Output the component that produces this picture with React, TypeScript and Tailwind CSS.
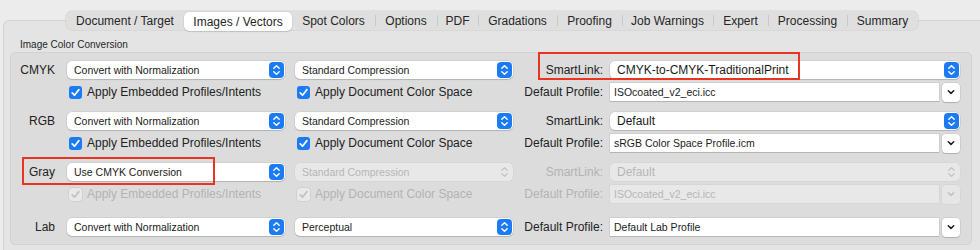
import React from "react";

const Stepper = ({ disabled }: { disabled?: boolean }) =>
  disabled ? (
    <svg width="15" height="16" viewBox="0 0 15 16" className="shrink-0">
      <path d="M4.8 6.3 7.5 3.7 10.2 6.3" fill="none" stroke="#c4c4c4" strokeWidth="1.3" strokeLinecap="round" strokeLinejoin="round" />
      <path d="M4.8 9.7 7.5 12.3 10.2 9.7" fill="none" stroke="#c4c4c4" strokeWidth="1.3" strokeLinecap="round" strokeLinejoin="round" />
    </svg>
  ) : (
    <svg width="15" height="16" viewBox="0 0 15 16" className="shrink-0">
      <rect x="0" y="0" width="15" height="16" rx="4" fill="#1b7bf5" />
      <path d="M4.8 6.3 7.5 3.7 10.2 6.3" fill="none" stroke="#ffffff" strokeWidth="1.4" strokeLinecap="round" strokeLinejoin="round" />
      <path d="M4.8 9.7 7.5 12.3 10.2 9.7" fill="none" stroke="#ffffff" strokeWidth="1.4" strokeLinecap="round" strokeLinejoin="round" />
    </svg>
  );

function Popup({ text, wide, large, disabled }: { text: string; wide?: boolean; large?: boolean; disabled?: boolean }) {
  return (
    <div
      className={`${wide ? "w-[350px]" : "w-[218px]"} h-[18px] rounded-[5px] flex items-center justify-between pl-[7px] pr-[1px] ${
        disabled
          ? "bg-[#e8e8e8] text-[#b6b6b6] shadow-[0_0_0_0.5px_rgba(0,0,0,0.04)]"
          : "bg-white text-[#1b1b1b] shadow-[0_0_0_0.5px_rgba(0,0,0,0.1),0_1px_1px_rgba(0,0,0,0.14)]"
      } ${large ? "text-[12px]" : "text-[10.5px]"}`}
    >
      <span className="whitespace-nowrap leading-none">{text}</span>
      <Stepper disabled={disabled} />
    </div>
  );
}

function Combo({ text, disabled }: { text: string; disabled?: boolean }) {
  return (
    <div className="flex items-center w-[350px]">
      <div
        className={`w-[329px] h-[18px] flex items-center pl-[4px] text-[10.5px] ${
          disabled
            ? "bg-[#e8e8e8] text-[#b6b6b6] shadow-[0_0_0_0.5px_rgba(0,0,0,0.05)]"
            : "bg-white text-[#1b1b1b] shadow-[0_0_0_0.5px_rgba(0,0,0,0.12),0_1px_0_rgba(0,0,0,0.12)]"
        }`}
      >
        <span className="whitespace-nowrap leading-none">{text}</span>
      </div>
      <div
        className={`ml-[3px] w-[18px] h-[19px] rounded-[4px] flex items-center justify-center ${
          disabled
            ? "bg-[#e6e6e6] shadow-[0_0_0_0.5px_rgba(0,0,0,0.05)]"
            : "bg-white shadow-[0_0_0_0.5px_rgba(0,0,0,0.12),0_1px_1px_rgba(0,0,0,0.15)]"
        }`}
      >
        <svg width="10" height="8" viewBox="0 0 10 8">
          <path d="M2.3 2.8 5 5.4 7.7 2.8" fill="none" stroke={disabled ? "#c0c0c0" : "#1b1b1b"} strokeWidth="1.5" strokeLinecap="round" strokeLinejoin="round" />
        </svg>
      </div>
    </div>
  );
}

function Check({ text, disabled }: { text: string; disabled?: boolean }) {
  return (
    <div className="flex items-center ml-[2px] w-[216px]">
      <div
        className={`w-[13px] h-[13px] rounded-[3px] flex items-center justify-center shrink-0 ${
          disabled ? "bg-[#e9e9e9] shadow-[0_0_0_0.5px_rgba(0,0,0,0.1)]" : "bg-[#1b7bf5]"
        }`}
      >
        <svg width="13" height="13" viewBox="0 0 13 13">
          <path d="M3.2 6.9 5.5 9.2 9.9 3.6" fill="none" stroke={disabled ? "#c2c2c2" : "#ffffff"} strokeWidth="1.7" strokeLinecap="round" strokeLinejoin="round" />
        </svg>
      </div>
      <span className={`ml-[5px] text-[12px] whitespace-nowrap leading-none ${disabled ? "text-[#b3b3b3]" : "text-[#222222]"}`}>{text}</span>
    </div>
  );
}

function RightLabel({ text, disabled }: { text: string; disabled?: boolean }) {
  return (
    <div className={`w-[90px] text-right text-[12px] whitespace-nowrap leading-none ${disabled ? "text-[#b3b3b3]" : "text-[#222222]"}`}>{text}</div>
  );
}

function Group({
  label,
  p1,
  p2,
  smart,
  profile,
  disabled,
  p2disabled,
}: {
  label: string;
  p1: string;
  p2: string;
  smart: string;
  profile: string;
  disabled?: boolean;
  p2disabled?: boolean;
}) {
  return (
    <div className="flex flex-col gap-[4px]">
      <div className="flex items-center h-[18px]">
        <div className="w-[44px] text-right text-[12px] text-[#222222] leading-none">{label}</div>
        <div className="ml-[12px]">
          <Popup text={p1} />
        </div>
        <div className="ml-[10px]">
          <Popup text={p2} disabled={p2disabled} />
        </div>
        <RightLabel text="SmartLink:" disabled={disabled} />
        <div className="ml-[7px]">
          <Popup text={smart} wide large disabled={disabled} />
        </div>
      </div>
      <div className="flex items-center h-[18px]">
        <div className="w-[44px]" />
        <div className="ml-[12px]">
          <Check text="Apply Embedded Profiles/Intents" disabled={disabled} />
        </div>
        <div className="ml-[10px]">
          <Check text="Apply Document Color Space" disabled={disabled} />
        </div>
        <RightLabel text="Default Profile:" disabled={disabled} />
        <div className="ml-[7px]">
          <Combo text={profile} disabled={disabled} />
        </div>
      </div>
    </div>
  );
}

const tabs: { name: string; w: string }[] = [
  { name: "Document / Target", w: "w-[118px]" },
  { name: "Images / Vectors", w: "w-[108px]" },
  { name: "Spot Colors", w: "w-[83px]" },
  { name: "Options", w: "w-[62px]" },
  { name: "PDF", w: "w-[41px]" },
  { name: "Gradations", w: "w-[79px]" },
  { name: "Proofing", w: "w-[65px]" },
  { name: "Job Warnings", w: "w-[91px]" },
  { name: "Expert", w: "w-[55px]" },
  { name: "Processing", w: "w-[79px]" },
  { name: "Summary", w: "w-[71px]" },
];

export default function App() {
  return (
    <div className="relative w-[980px] h-[250px] overflow-hidden bg-[#ececec] font-['Liberation_Sans','Arial',sans-serif] pt-[20px]">
      <div className="ml-[3px] w-[990px] h-[240px] bg-[#e4e4e4] border border-[#d3d3d3] rounded-tl-[6px]">
        {/* Tabs */}
        <div className="-mt-[10px] ml-[62px] flex h-[19px] w-[852px] rounded-[6px] bg-[#dfdfdf] shadow-[0_0_0_0.5px_rgba(0,0,0,0.1)]">
          {tabs.map((t, i) => (
            <div
              key={t.name}
              className={`relative ${t.w} h-full flex items-center justify-center text-[12px] text-[#262626] whitespace-nowrap ${
                i === 1 ? "bg-white rounded-[5px] my-[1px] h-[17px] shadow-[0_0_0_0.5px_rgba(0,0,0,0.08),0_1px_1px_rgba(0,0,0,0.12)]" : ""
              } ${i > 2 ? "before:absolute before:left-0 before:top-[4px] before:h-[11px] before:w-px before:bg-[#c9c9c9]" : ""}`}
            >
              {t.name}
            </div>
          ))}
        </div>
        <div className="mt-[9px] ml-[16px] text-[10px] leading-[12px] text-[#262626]">Image Color Conversion</div>
        {/* Group box */}
        <div className="mt-[1px] ml-[6px] w-[962px] h-[193px] rounded-[5px] bg-[#dcdcdc] border border-[#d2d2d2] pt-[8px] flex flex-col">
          <Group
            label="CMYK"
            p1="Convert with Normalization"
            p2="Standard Compression"
            smart="CMYK-to-CMYK-TraditionalPrint"
            profile="ISOcoated_v2_eci.icc"
          />
          <div className="mt-[11px]">
            <Group
              label="RGB"
              p1="Convert with Normalization"
              p2="Standard Compression"
              smart="Default"
              profile="sRGB Color Space Profile.icm"
            />
          </div>
          <div className="mt-[11px]">
            <Group
              label="Gray"
              p1="Use CMYK Conversion"
              p2="Standard Compression"
              smart="Default"
              profile="ISOcoated_v2_eci.icc"
              disabled
              p2disabled
            />
          </div>
          <div className="mt-[15px] flex items-center h-[18px]">
            <div className="w-[44px] text-right text-[12px] text-[#222222] leading-none">Lab</div>
            <div className="ml-[12px]">
              <Popup text="Convert with Normalization" />
            </div>
            <div className="ml-[10px]">
              <Popup text="Perceptual" />
            </div>
            <RightLabel text="Default Profile:" />
            <div className="ml-[7px]">
              <Combo text="Default Lab Profile" />
            </div>
          </div>
        </div>
      </div>
      {/* Highlight boxes */}
      <div className="absolute left-[538px] top-[52px] w-[262px] h-[28px] border-2 border-[#eb3324]" />
      <div className="absolute left-[22px] top-[157px] w-[193px] h-[28px] border-2 border-[#eb3324]" />
    </div>
  );
}
